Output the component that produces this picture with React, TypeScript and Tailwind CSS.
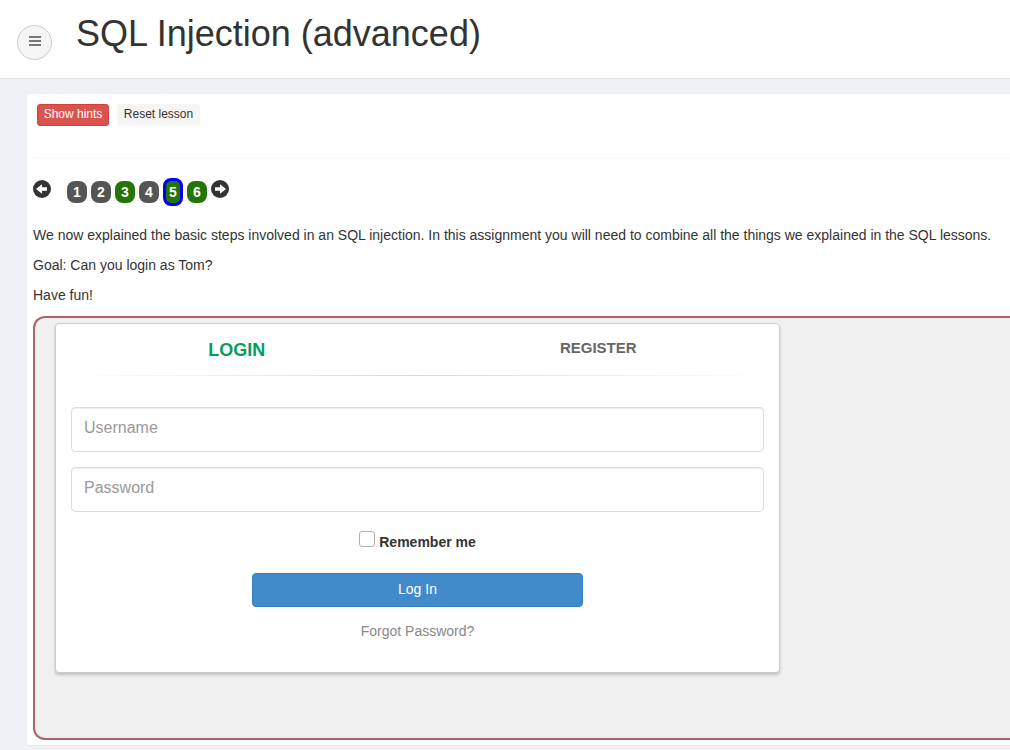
import { useState } from "react";

const pages = [
  { label: "1", solved: false },
  { label: "2", solved: false },
  { label: "3", solved: true },
  { label: "4", solved: false },
  { label: "5", solved: true },
  { label: "6", solved: true },
];

function ArrowCircle({ flip = false }: { flip?: boolean }) {
  return (
    <svg viewBox="0 0 18 18" className={flip ? "size-[18px] rotate-180" : "size-[18px]"} aria-hidden="true">
      <circle cx="9" cy="9" r="9" fill="#333" />
      <path d="M3 9 9 4.2V7.2H14V10.8H9V13.8Z" fill="#fff" />
    </svg>
  );
}

function Header() {
  return (
    <header className="flex h-[79px] items-start border-b border-[#e5e5e9] bg-white pl-[17px]">
      <button
        type="button"
        aria-label="Toggle menu"
        className="mt-[25px] flex size-[35px] items-center justify-center rounded-full border border-[#ccc] bg-[#f5f5f5] pb-[3px] pl-px"
      >
        <svg viewBox="0 0 12 10" className="h-[10px] w-3" aria-hidden="true">
          <path d="M0 0h12v2H0zM0 4h12v2H0zM0 8h12v2H0z" fill="#767676" />
        </svg>
      </button>
      <h1 className="ml-6 mt-3 whitespace-nowrap text-[36px] leading-[44px]">SQL Injection (advanced)</h1>
    </header>
  );
}

function Pager() {
  const [current, setCurrent] = useState(4);
  return (
    <nav aria-label="Lesson pages" className="mt-[19px] flex h-7 items-start">
      <button type="button" aria-label="Previous page" className="mr-4 mt-[2px]" onClick={() => setCurrent(Math.max(0, current - 1))}>
        <ArrowCircle />
      </button>
      <div className="flex h-7 items-center gap-1">
        {pages.map((p, i) => (
          <button
            key={p.label}
            type="button"
            onClick={() => setCurrent(i)}
            className={
              (p.solved ? "bg-[#227506] " : "bg-[#555] ") +
              (i === current ? "h-7 border-3 border-[#0000ff] " : "h-[22px] ") +
              "flex w-5 items-center justify-center rounded-lg text-sm font-bold text-white"
            }
          >
            {p.label}
          </button>
        ))}
      </div>
      <button type="button" aria-label="Next page" className="ml-1 mt-[2px]" onClick={() => setCurrent(Math.min(5, current + 1))}>
        <ArrowCircle flip />
      </button>
    </nav>
  );
}

function LoginCard() {
  const field =
    "block h-[45px] w-full rounded-[4px] border border-[#ddd] bg-white px-3 pb-1 text-base text-[#555] shadow-[inset_0_1px_1px_rgba(0,0,0,0.075)] placeholder:text-[#999]";
  return (
    <section className="ml-5 w-[725px] max-w-full rounded-[4px] border border-[#ccc] bg-white pb-[31px] shadow-[0_2px_3px_rgba(0,0,0,0.2)]">
      <div className="grid h-[51px] grid-cols-2 text-center font-bold">
        <a href="#login" className="pt-[14px] text-lg leading-6 text-[#029f5b]">LOGIN</a>
        <a href="#register" className="pt-3 text-[15px] leading-6 text-[#666]">REGISTER</a>
      </div>
      <div className="mx-[15px] h-px bg-linear-to-r from-transparent via-black/15 to-transparent" />
      <form className="flex flex-col items-center px-[15px] pt-[31px]" onSubmit={(e) => e.preventDefault()}>
        <input type="text" aria-label="Username" placeholder="Username" className={field} />
        <input type="password" aria-label="Password" placeholder="Password" className={field + " mt-[15px]"} />
        <div className="mt-5 flex h-5 items-start gap-1">
          <input
            id="remember"
            type="checkbox"
            className="mt-[-1px] size-4 appearance-none rounded-[3px] border border-[#b6b0aa] bg-white checked:bg-[#428bca]"
          />
          <label htmlFor="remember" className="text-sm leading-5 font-bold">Remember me</label>
        </div>
        <button
          type="submit"
          className="mt-[21px] h-[34px] w-[331px] rounded-[4px] border border-[#357ebd] bg-[#428bca] pb-[2px] text-sm text-white"
        >
          Log In
        </button>
        <a href="#forgot" className="mt-[14px] text-sm leading-5 text-[#888]">Forgot Password?</a>
      </form>
    </section>
  );
}

export default function App() {
  return (
    <div className="min-h-screen overflow-hidden bg-[#f0f1f7] font-['Liberation_Sans',Arial,sans-serif] text-sm text-[#333]">
      <Header />
      <main className="mt-[15px] mb-1 ml-[27px] rounded-l-[4px] border-b border-[#e7e7eb] bg-white pt-[10px] pb-[5px] pl-[6px]">
        <div className="flex h-[55px] items-start gap-2 rounded-bl-[4px] border-b border-[#f5f5f5] pl-1 text-xs">
          <button type="button" className="h-[22px] min-w-[72px] rounded-[3px] border border-[#d43f3a] bg-[#d9534f] px-[5px] pb-[2px] text-white">
            Show hints
          </button>
          <button type="button" className="h-[22px] min-w-[83px] rounded-[3px] bg-[#f7f5f4] px-[6px] pb-[2px]">
            Reset lesson
          </button>
        </div>
        <Pager />
        <div className="mt-[19px] space-y-[10px] leading-5">
          <p className="whitespace-nowrap">
            We now explained the basic steps involved in an SQL injection. In this assignment you will need to combine all
            the things we explained in the SQL lessons.
          </p>
          <p>Goal: Can you login as Tom?</p>
          <p>Have fun!</p>
        </div>
        <div className="mt-[11px] rounded-l-[12px] border-y-2 border-l-2 border-[#a66] bg-[#f0f0f0] pt-[5px] pb-[65px]">
          <LoginCard />
        </div>
      </main>
    </div>
  );
}
